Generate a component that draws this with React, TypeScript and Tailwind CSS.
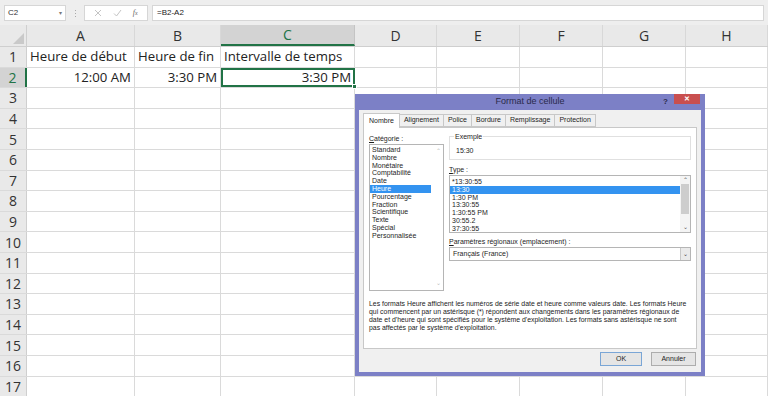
import React from 'react';

const COLS = [
  { label: 'A', w: 108 },
  { label: 'B', w: 86 },
  { label: 'C', w: 134 },
  { label: 'D', w: 82 },
  { label: 'E', w: 83 },
  { label: 'F', w: 83 },
  { label: 'G', w: 83 },
  { label: 'H', w: 82 }
];

const ROWS = Array.from({ length: 17 }, (_, i) => i + 1);

const CELLS: Record<string, { text: string; right?: boolean }> = {
  A1: { text: 'Heure de début' },
  B1: { text: 'Heure de fin' },
  C1: { text: 'Intervalle de temps' },
  A2: { text: '12:00 AM', right: true },
  B2: { text: '3:30 PM', right: true },
  C2: { text: '3:30 PM', right: true }
};

const CATEGORIES = [
  'Standard',
  'Nombre',
  'Monétaire',
  'Comptabilité',
  'Date',
  'Heure',
  'Pourcentage',
  'Fraction',
  'Scientifique',
  'Texte',
  'Spécial',
  'Personnalisée'
];

const TYPES = ['*13:30:55', '13:30', '1:30 PM', '13:30:55', '1:30:55 PM', '30:55.2', '37:30:55'];

const TABS = ['Nombre', 'Alignement', 'Police', 'Bordure', 'Remplissage', 'Protection'];

function FormulaBar() {
  return (
    <div className="flex h-[25px] items-start gap-[4px] bg-[#eeeeee] px-[4px] pt-[5px]">
      <div className="flex h-[16px] w-[62px] items-center justify-between border border-[#d6d6d6] bg-white px-[3px] text-[8px] text-[#333]">
        <span>C2</span>
        <span className="text-[6px] text-[#777]">▾</span>
      </div>
      <div className="flex h-[16px] w-[10px] flex-col items-center justify-center gap-[2px]">
        <span className="h-[1px] w-[1px] bg-[#aaa]" />
        <span className="h-[1px] w-[1px] bg-[#aaa]" />
        <span className="h-[1px] w-[1px] bg-[#aaa]" />
      </div>
      <div className="flex h-[16px] w-[64px] items-center justify-around border border-[#d6d6d6] bg-white px-[4px] text-[#b5b5b5]">
        <svg width="8" height="8" viewBox="0 0 8 8">
          <path d="M1 1 L7 7 M7 1 L1 7" stroke="#c4c4c4" strokeWidth="1" />
        </svg>
        <svg width="9" height="8" viewBox="0 0 9 8">
          <path d="M1 4.5 L3.5 7 L8 1" stroke="#c4c4c4" strokeWidth="1" fill="none" />
        </svg>
        <span className="font-['Liberation_Serif',serif] text-[8px] italic text-[#666]">
          f<span className="text-[6px]">x</span>
        </span>
      </div>
      <div className="flex h-[16px] flex-1 items-center border border-[#d6d6d6] bg-white px-[4px] text-[8px] text-[#222]">
        =B2-A2
      </div>
    </div>
  );
}

function Sheet() {
  return (
    <div className="font-['Open_Sans','Liberation_Sans',sans-serif] text-[#222]">
      <div className="flex h-[22px] border-b border-[#cfcfcf] bg-[#e9e9e9]">
        <div className="relative w-[27px] border-r border-[#cfcfcf]">
          <svg className="absolute bottom-[2px] right-[2px]" width="11" height="11" viewBox="0 0 11 11">
            <path d="M11 0 L11 11 L0 11 Z" fill="#c9c9c9" />
          </svg>
        </div>
        {COLS.map((c) => (
          <div
            key={c.label}
            style={{ width: c.w }}
            className={
              c.label === 'C'
                ? 'flex items-center justify-center border-r border-b-2 border-r-[#c4c4c4] border-b-[#217346] bg-[#d3d3d3] text-[14px] text-[#217346]'
                : 'flex items-center justify-center border-r border-[#d8d8d8] text-[14px] text-[#333]'
            }
          >
            {c.label}
          </div>
        ))}
      </div>
      {ROWS.map((r) => (
        <div key={r} className="flex h-[20.6px] border-b border-[#dadada]">
          <div
            className={
              r === 2
                ? 'flex w-[27px] items-center justify-center border-r-2 border-[#217346] bg-[#d3d3d3] text-[14px] text-[#217346]'
                : 'flex w-[27px] items-center justify-center border-r border-[#cfcfcf] bg-[#e9e9e9] text-[14px] text-[#333]'
            }
          >
            {r}
          </div>
          {COLS.map((c) => {
            const key = `${c.label}${r}`;
            const cell = CELLS[key];
            const selected = key === 'C2';
            return (
              <div
                key={key}
                style={{ width: c.w }}
                className={
                  selected
                    ? 'relative flex items-center justify-end whitespace-nowrap border-2 border-[#217346] px-[2px] text-[13.2px]'
                    : `flex items-center whitespace-nowrap border-r border-[#dadada] px-[3px] text-[13.2px] ${
                        cell?.right ? 'justify-end' : ''
                      }`
                }
              >
                {cell?.text}
                {selected && (
                  <span className="absolute bottom-[-4px] right-[-4px] h-[5px] w-[5px] border border-white bg-[#217346]" />
                )}
              </div>
            );
          })}
        </div>
      ))}
    </div>
  );
}

function Dialog() {
  return (
    <div className="absolute left-[355px] top-[94px] flex h-[282px] w-[350px] flex-col bg-[#7c80c6] px-[4px] pb-[4px] font-['Liberation_Sans','Noto_Sans',sans-serif] text-[#1e1e1e]">
      <div className="relative flex h-[16px] shrink-0 items-center justify-center text-[9px] text-[#2a2a4a]">
        Format de cellule
        <span className="absolute right-[33px] top-[2px] text-[8px] font-bold text-[#2a2a4a]">?</span>
        <span className="absolute right-[1px] top-0 flex h-[10px] w-[26px] items-center justify-center bg-[#c94f4f] text-[7px] font-bold text-white">
          ✕
        </span>
      </div>
      <div className="flex flex-1 flex-col bg-[#f0f0f0] px-[4px] pt-[2px]">
        <div className="flex h-[15px] items-end">
          {TABS.map((t) => (
            <div
              key={t}
              className={
                t === 'Nombre'
                  ? 'relative z-10 -mb-px flex h-[15px] items-center border border-b-0 border-[#c8c8c8] bg-white px-[5px] text-[7px]'
                  : 'flex h-[13px] items-center border border-l-0 border-[#c8c8c8] bg-[#f0f0f0] px-[4px] text-[7px]'
              }
            >
              {t}
            </div>
          ))}
        </div>
        <div className="flex h-[222px] flex-col border border-[#c8c8c8] bg-white px-[5px] pt-[6px]">
          <div className="flex gap-[5px]">
            <div className="flex w-[75px] flex-col">
              <div className="h-[9px] text-[7px] leading-[9px]">
                <span className="underline">C</span>atégorie :
              </div>
              <div className="relative mt-[1px] h-[147px] border border-[#b5b5b5] bg-white pt-[1px]">
                {CATEGORIES.map((c) => (
                  <div
                    key={c}
                    className={
                      c === 'Heure'
                        ? 'mr-[12px] h-[7.8px] bg-[#3393f0] pl-[2px] text-[7px] leading-[7.8px] text-white'
                        : 'mr-[12px] h-[7.8px] pl-[2px] text-[7px] leading-[7.8px]'
                    }
                  >
                    {c}
                  </div>
                ))}
                <span className="absolute right-[2px] top-[2px] text-[6px] text-[#bbb]">⌃</span>
                <span className="absolute bottom-[2px] right-[2px] text-[6px] text-[#bbb]">⌄</span>
              </div>
            </div>
            <div className="flex flex-1 flex-col">
              <div className="relative mt-[2px] h-[24px] border border-[#e0e0e0]">
                <span className="absolute left-[4px] top-[-5px] bg-white px-[1px] text-[7px]">Exemple</span>
                <div className="pl-[6px] pt-[10px] text-[7px] leading-[8px]">15:30</div>
              </div>
              <div className="mt-[5px] h-[9px] text-[7px] leading-[9px]">
                <span className="underline">T</span>ype :
              </div>
              <div className="relative mt-[1px] flex h-[58px] border border-[#b5b5b5] bg-white">
                <div className="flex-1 pt-[2px]">
                  {TYPES.map((t, i) => (
                    <div
                      key={i}
                      className={
                        i === 1
                          ? 'h-[7.8px] bg-[#3393f0] pl-[2px] text-[7px] leading-[7.8px] text-white'
                          : 'h-[7.8px] pl-[2px] text-[7px] leading-[7.8px]'
                      }
                    >
                      {t}
                    </div>
                  ))}
                </div>
                <div className="flex w-[10px] flex-col items-center bg-[#f4f4f4]">
                  <span className="h-[7px] text-[6px] leading-[8px] text-[#555]">⌃</span>
                  <span className="mt-[1px] h-[30px] w-[8px] bg-[#cdcdcd]" />
                  <span className="mt-auto h-[8px] text-[6px] leading-[6px] text-[#555]">⌄</span>
                </div>
              </div>
              <div className="mt-[4px] h-[9px] text-[7px] leading-[9px]">
                <span className="underline">P</span>aramètres régionaux (emplacement) :
              </div>
              <div className="mt-[1px] flex h-[14px] items-center justify-between border border-[#b5b5b5] bg-white pl-[3px]">
                <span className="text-[7px]">Français (France)</span>
                <span className="flex h-[12px] w-[10px] items-center justify-center border-l border-[#c8c8c8] bg-[#eaeaea] text-[6px] text-[#444]">
                  ⌄
                </span>
              </div>
            </div>
          </div>
          <p className="mt-[9px] whitespace-nowrap text-[6.9px] leading-[8px] text-[#222]">
            Les formats Heure affichent les numéros de série date et heure comme valeurs date. Les formats Heure
            <br />
            qui commencent par un astérisque (*) répondent aux changements dans les paramètres régionaux de
            <br />
            date et d'heure qui sont spécifiés pour le système d'exploitation. Les formats sans astérisque ne sont
            <br />
            pas affectés par le système d'exploitation.
          </p>
        </div>
        <div className="flex justify-end gap-[9px] pr-[1px] pt-[3px]">
          <div className="flex h-[14px] w-[42px] items-center justify-center border border-[#7aa6d6] bg-[#e5e5e5] text-[7px]">
            OK
          </div>
          <div className="flex h-[14px] w-[45px] items-center justify-center border border-[#adadad] bg-[#e5e5e5] text-[7px]">
            Annuler
          </div>
        </div>
      </div>
    </div>
  );
}

export default function App() {
  return (
    <div className="relative h-[396px] w-[768px] overflow-hidden bg-white font-['Liberation_Sans',sans-serif]">
      <FormulaBar />
      <Sheet />
      <Dialog />
    </div>
  );
}
